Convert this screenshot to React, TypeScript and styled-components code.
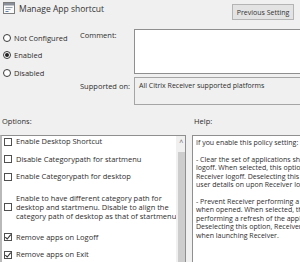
import React from 'react';
import styled, { createGlobalStyle } from 'styled-components';

const GlobalStyle = createGlobalStyle`
  html, body {
    margin: 0;
    padding: 0;
    background: #f0f0f0;
  }
`;

type Option = { label: string[]; checked: boolean };

const options: Option[] = [
  { label: ['Enable Desktop Shortcut'], checked: false },
  { label: ['Disable Categorypath for startmenu'], checked: false },
  { label: ['Enable Categorypath for desktop'], checked: false },
  {
    label: [
      'Enable to have different category path for',
      'desktop and startmenu. Disable to align the',
      'category path of desktop as that of startmenu',
    ],
    checked: false,
  },
  { label: ['Remove apps on Logoff'], checked: true },
  { label: ['Remove apps on Exit'], checked: true },
];

// help lines run past the right edge of the window, as in the dialog
const helpText: string[][] = [
  ['If you enable this policy setting:'],
  [
    '- Clear the set of applications shortcuts',
    'logoff. When selected, this option',
    'Receiver logoff. Deselecting this option',
    'user details on upon Receiver logoff.',
  ],
  [
    '- Prevent Receiver performing a refresh',
    'when opened. When selected, this',
    'performing a refresh of the application',
    'Deselecting this option, Receiver',
    'when launching Receiver.',
  ],
];

const radios = ['Not Configured', 'Enabled', 'Disabled'];

const PolicyIcon = () => (
  <svg width="12" height="12" viewBox="0 0 12 12">
    <rect x="0.5" y="0.5" width="11" height="11" fill="#fafafa" stroke="#7d7d7d" />
    <rect x="1" y="1" width="10" height="2.5" fill="#8a8f99" />
    <rect x="2.5" y="5" width="7" height="1" fill="#9aa3ad" />
    <rect x="2.5" y="7" width="5" height="1" fill="#9aa3ad" />
    <rect x="2.5" y="9" width="3" height="1" fill="#5d7fb0" />
  </svg>
);

const CheckMark = () => (
  <svg width="8" height="8" viewBox="0 0 8 8">
    <path d="M1.3 4.2 L3.2 6 L6.8 1.6" fill="none" stroke="#333" strokeWidth="1.1" />
  </svg>
);

const App: React.FC = () => {
  return (
    <>
      <GlobalStyle />
      <Window>
        <TitleBar>
          <PolicyIcon />
          <Title>Manage App shortcut</Title>
          <NavButton>Previous Setting</NavButton>
        </TitleBar>

        <SettingsArea>
          <RadioGroup>
            {radios.map((r) => (
              <RadioRow key={r}>
                <Radio $selected={r === 'Enabled'} />
                <span>{r}</span>
              </RadioRow>
            ))}
          </RadioGroup>
          <FieldLabel>Comment:</FieldLabel>
          <CommentBox />
          <FieldLabel $top={4}>Supported on:</FieldLabel>
          <SupportedBox>All Citrix Receiver supported platforms</SupportedBox>
        </SettingsArea>

        <PanelHeaders>
          <span>Options:</span>
          <span>Help:</span>
        </PanelHeaders>

        <Panels>
          <OptionsPanel>
            <OptionsList>
              {options.map((o) => (
                <OptionRow key={o.label[0]} $multi={o.label.length > 1}>
                  <CheckBox>{o.checked && <CheckMark />}</CheckBox>
                  <OptionText>
                    {o.label.map((l) => (
                      <div key={l}>{l}</div>
                    ))}
                  </OptionText>
                </OptionRow>
              ))}
            </OptionsList>
            <ScrollBar>
              <ScrollArrow>^</ScrollArrow>
              <ScrollThumb />
            </ScrollBar>
          </OptionsPanel>
          <HelpPanel>
            {helpText.map((p) => (
              <HelpParagraph key={p[0]}>
                {p.map((l) => (
                  <div key={l}>{l}</div>
                ))}
              </HelpParagraph>
            ))}
          </HelpPanel>
        </Panels>
      </Window>
    </>
  );
};

export default App;

const Window = styled.div`
  width: 300px;
  height: 262px;
  overflow: hidden;
  background: #f0f0f0;
  color: #2e2e2e;
  font-family: 'Open Sans', 'Noto Sans', sans-serif;
  font-size: 7px;
  display: flex;
  flex-direction: column;
`;

const TitleBar = styled.div`
  display: flex;
  align-items: center;
  height: 24px;
  padding: 0 6px 0 3px;
  flex-shrink: 0;

  svg {
    margin-top: -8px;
  }
`;

const Title = styled.span`
  margin-left: 4px;
  margin-top: -8px;
  font-size: 8.5px;
  color: #333;
`;

const NavButton = styled.div`
  margin-left: auto;
  width: 62px;
  height: 16px;
  box-sizing: border-box;
  border: 1px solid #b4b4b4;
  background: #e3e3e3;
  display: flex;
  align-items: center;
  justify-content: center;
  font-size: 7px;
  color: #333;
`;

const SettingsArea = styled.div`
  display: grid;
  grid-template-columns: 80px 54px 1fr;
  grid-template-rows: 45px 28px;
  row-gap: 3px;
  margin-top: 5px;
  flex-shrink: 0;
`;

const RadioGroup = styled.div`
  grid-row: 1 / span 2;
  display: flex;
  flex-direction: column;
  padding-left: 3px;
`;

const RadioRow = styled.div`
  display: flex;
  align-items: center;
  gap: 3px;
  height: 17.5px;
  font-size: 7.5px;
`;

const Radio = styled.span<{ $selected?: boolean }>`
  width: 8px;
  height: 8px;
  box-sizing: border-box;
  border-radius: 50%;
  border: 1px solid #3a3a3a;
  background: #fff;
  display: flex;
  align-items: center;
  justify-content: center;

  &::after {
    content: '';
    width: 4px;
    height: 4px;
    border-radius: 50%;
    background: ${(p) => (p.$selected ? '#222' : 'transparent')};
  }
`;

const FieldLabel = styled.div<{ $top?: number }>`
  padding-top: ${(p) => p.$top ?? 1}px;
  font-size: 7.5px;
`;

const CommentBox = styled.div`
  background: #fff;
  border: 1px solid #8f8f8f;
  border-right: none;
`;

const SupportedBox = styled.div`
  border: 1px solid #a5a5a5;
  border-right: none;
  padding: 3px 4px;
  font-size: 7px;
`;

const PanelHeaders = styled.div`
  display: grid;
  grid-template-columns: 191px 1fr;
  padding: 11px 0 0 2px;
  height: 20px;
  box-sizing: border-box;
  font-size: 7.5px;
  flex-shrink: 0;

  span:last-child {
    padding-left: 1px;
  }
`;

const Panels = styled.div`
  display: grid;
  grid-template-columns: 186px 1fr;
  column-gap: 6px;
  margin-top: 10px;
  flex: 1;
  min-height: 0;
`;

const OptionsPanel = styled.div`
  display: flex;
  background: #fff;
  border: 1px solid #8f8f8f;
  border-left: 2px solid #b9b9b9;
  border-bottom: none;
  overflow: hidden;
`;

const OptionsList = styled.div`
  flex: 1;
  margin-top: -3px;
`;

const OptionRow = styled.div<{ $multi?: boolean }>`
  display: flex;
  align-items: center;
  gap: 4px;
  min-height: 17.5px;
  padding: ${(p) => (p.$multi ? '8px 0' : '0')};
  padding-left: 2px;
  box-sizing: border-box;
`;

const CheckBox = styled.span`
  width: 8px;
  height: 8px;
  flex-shrink: 0;
  box-sizing: border-box;
  border: 1px solid #505050;
  background: #fff;
  display: flex;
  align-items: center;
  justify-content: center;

  svg {
    margin: -1px;
  }
`;

const OptionText = styled.div`
  line-height: 9px;
  font-size: 7.5px;
  white-space: nowrap;
`;

const ScrollBar = styled.div`
  width: 10px;
  flex-shrink: 0;
  background: #f0f0f0;
  display: flex;
  flex-direction: column;
  align-items: center;
`;

const ScrollArrow = styled.div`
  height: 12px;
  line-height: 14px;
  font-size: 7px;
  color: #606060;
`;

const ScrollThumb = styled.div`
  width: 7px;
  flex: 1;
  margin-top: 4px;
  background: #cdcdcd;
`;

const HelpPanel = styled.div`
  background: #fff;
  border: 1px solid #8f8f8f;
  border-right: none;
  border-bottom: none;
  padding: 3px 0 0 3px;
  overflow: hidden;
  white-space: nowrap;
  line-height: 8.4px;
  font-size: 7px;
`;

const HelpParagraph = styled.div`
  margin-bottom: 8.5px;
`;
